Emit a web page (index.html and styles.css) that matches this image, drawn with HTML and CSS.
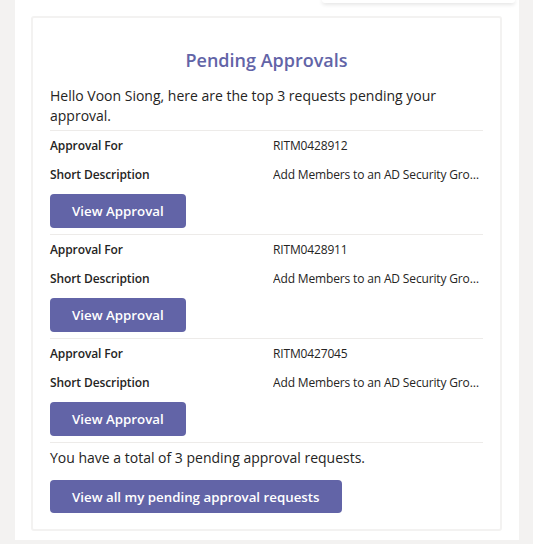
FILE: index.html
```html
<!DOCTYPE html>
<html lang="en">
<head>
<meta charset="utf-8">
<title>Pending Approvals</title>
<link rel="stylesheet" href="styles.css">
</head>
<body>
<div class="pane">
  <div class="prev-row"><div class="prev-bubble"></div></div>
  <div class="card">
    <h1 class="title">Pending Approvals</h1>
    <p class="greeting">Hello Voon Siong, here are the top 3 requests pending your approval.</p>

    <div class="item">
      <div class="row"><span class="label">Approval For</span><span class="value">RITM0428912</span></div>
      <div class="row"><span class="label">Short Description</span><span class="value">Add Members to an AD Security Group</span></div>
      <button class="btn">View Approval</button>
    </div>

    <div class="item">
      <div class="row"><span class="label">Approval For</span><span class="value">RITM0428911</span></div>
      <div class="row"><span class="label">Short Description</span><span class="value">Add Members to an AD Security Group</span></div>
      <button class="btn">View Approval</button>
    </div>

    <div class="item">
      <div class="row"><span class="label">Approval For</span><span class="value">RITM0427045</span></div>
      <div class="row"><span class="label">Short Description</span><span class="value">Add Members to an AD Security Group</span></div>
      <button class="btn">View Approval</button>
    </div>

    <div class="footer">
      <p class="total">You have a total of 3 pending approval requests.</p>
      <button class="btn">View all my pending approval requests</button>
    </div>
  </div>
</div>
</body>
</html>
```
FILE: styles.css
```css
* { box-sizing: border-box; }
html, body { margin: 0; padding: 0; }
body {
  background: #f3f2f1;
  font-family: "Open Sans", "Noto Sans", sans-serif;
  color: #252423;
  height: 544px;
  overflow: hidden;
}
.pane {
  margin-left: 15px;
  width: 504px;
  height: 540px;
  background: #fff;
  padding-left: 16px;
  padding-right: 17px;
}
.prev-row {
  display: flex;
  justify-content: flex-end;
  margin-right: -13px;
}
.prev-bubble {
  width: 193px;
  height: 3px;
  background: #fff;
  border-radius: 0 0 4px 4px;
  box-shadow: 0 1px 4px rgba(0,0,0,0.16);
}
.card {
  margin-top: 13px;
  border: 2px solid #f3f2f1;
  border-radius: 3px;
  padding: 30px 17px 16px 17px;
  background: #fff;
}
.title {
  margin: 0;
  font-size: 18px;
  line-height: 24px;
  font-weight: 600;
  color: #6264a7;
  text-align: center;
}
.greeting {
  margin: 14px 0 0 0;
  font-size: 14px;
  line-height: 20px;
}
.item {
  margin-top: 4px;
  border-top: 1px solid #edebe9;
  padding-bottom: 6px;
}
.row {
  display: grid;
  grid-template-columns: 223px 1fr;
  height: 29px;
  align-items: center;
  font-size: 12px;
}
.label { font-weight: 600; letter-spacing: -0.1px; }
.value {
  white-space: nowrap;
  overflow: hidden;
  text-overflow: ellipsis;
  letter-spacing: -0.15px;
}
.item .btn { margin-top: 5px; }
.item + .item { margin-top: 0; }
.footer {
  border-top: 1px solid #edebe9;
}
.total {
  margin: 5px 0 0 0;
  font-size: 14px;
  line-height: 20px;
}
.btn {
  display: block;
  height: 34px;
  padding: 0 22px;
  border: none;
  border-radius: 4px;
  background: #6264a7;
  color: #fff;
  font-family: inherit;
  font-size: 13.3px;
  font-weight: 600;
  cursor: pointer;
}
.footer .btn { margin-top: 12px; height: 33px; }
```
